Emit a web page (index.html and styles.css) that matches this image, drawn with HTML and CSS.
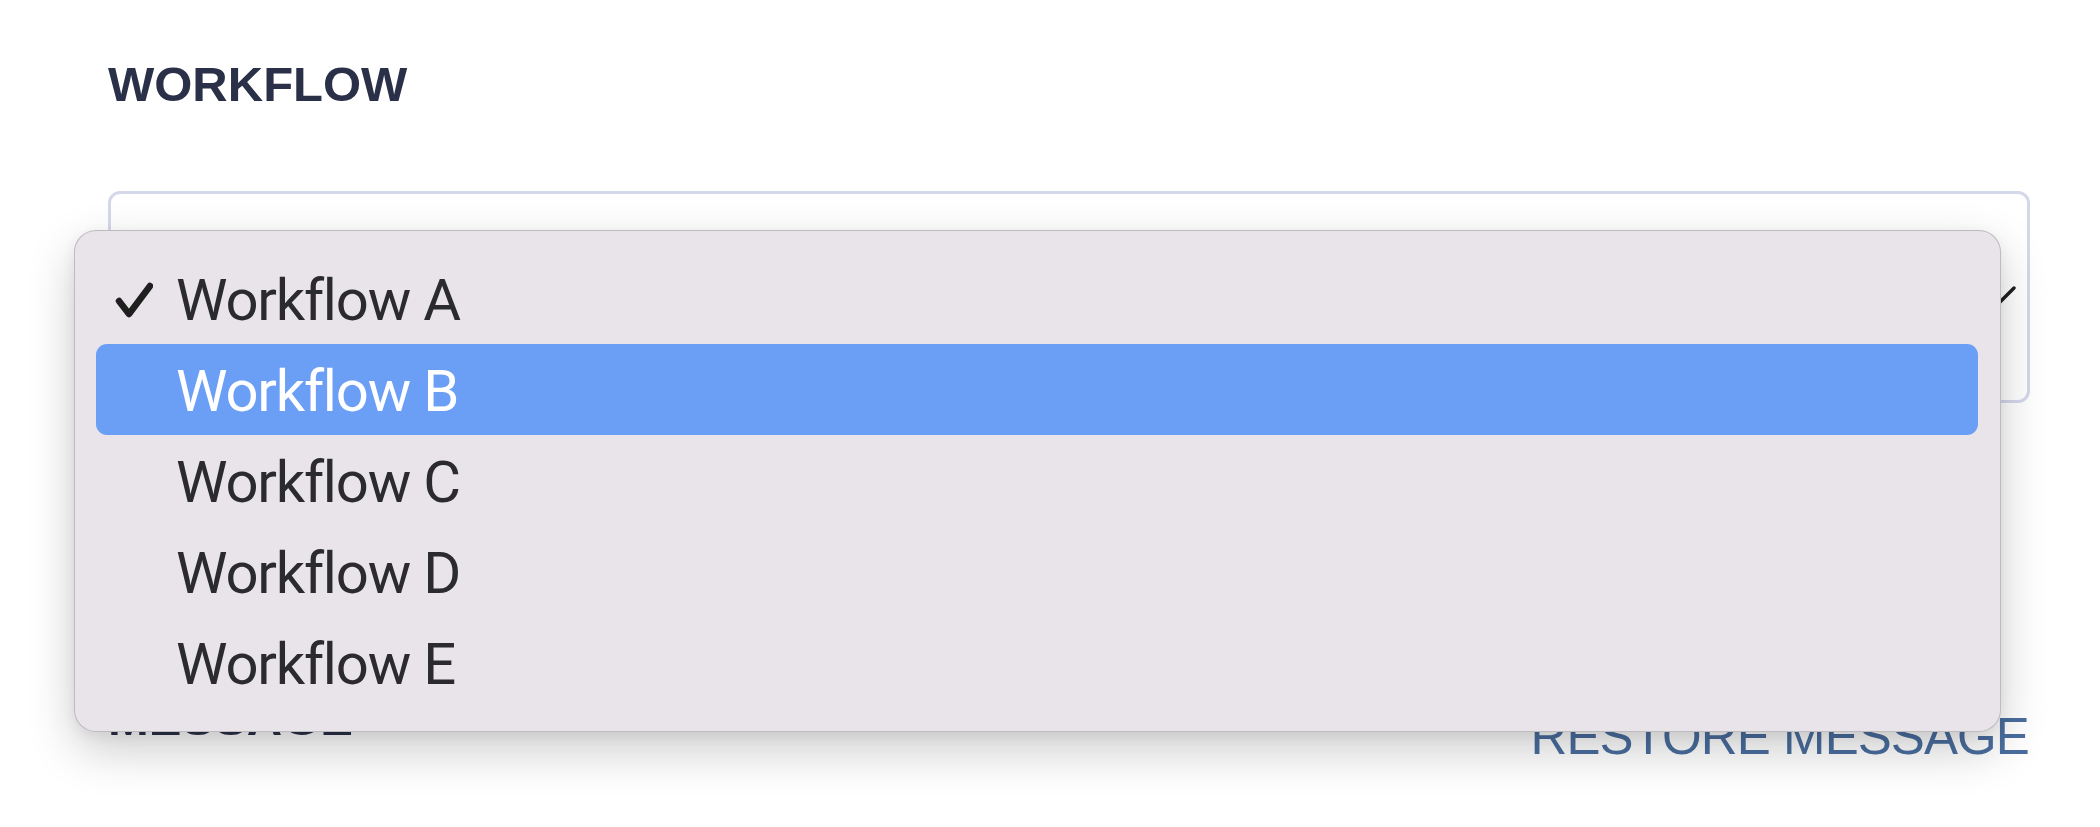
FILE: index.html
```html
<!DOCTYPE html>
<html lang="en">
<head>
<meta charset="utf-8">
<title>Workflow</title>
<link rel="stylesheet" href="styles.css">
</head>
<body>
<div class="page">
  <h2 class="label">WORKFLOW</h2>
  <div class="select">
    <svg class="chevron" width="36" height="20" viewBox="0 0 36 20"><polyline points="2,2 18,18 34,2" fill="none" stroke="#1e1e1e" stroke-width="3.4" stroke-linecap="round" stroke-linejoin="round"/></svg>
  </div>
  <div class="message-row">
    <h2 class="label">MESSAGE</h2>
    <a class="restore">RESTORE MESSAGE</a>
  </div>

  <ul class="menu">
    <li class="item checked">
      <svg class="check" width="38" height="36" viewBox="0 0 38 36"><polyline points="4,19 14,32 35,4" fill="none" stroke="#1f1f1f" stroke-width="6.5" stroke-linecap="round" stroke-linejoin="round"/></svg>
      <span>Workflow A</span>
    </li>
    <li class="item active"><span>Workflow B</span></li>
    <li class="item"><span>Workflow C</span></li>
    <li class="item"><span>Workflow D</span></li>
    <li class="item"><span>Workflow E</span></li>
  </ul>
</div>
</body>
</html>
```

FILE: styles.css
```css
html, body {
  margin: 0;
  padding: 0;
  background: #ffffff;
}

.page {
  position: relative;
  padding: 60px 70px 0 108px;
  height: 827px;
  box-sizing: border-box;
  overflow: hidden;
}

.label {
  margin: 0;
  font-family: "Liberation Sans", Arial, sans-serif;
  font-weight: 700;
  font-size: 49px;
  line-height: 49px;
  color: #2b3049;
  letter-spacing: 0;
}

.select {
  margin-top: 82px;
  height: 212px;
  box-sizing: border-box;
  border: 3px solid #d4d8eb;
  border-radius: 12px;
  background: #ffffff;
  display: flex;
  align-items: center;
  justify-content: flex-end;
  padding-right: 11px;
}

.chevron {
  display: block;
  margin-top: -2px;
}

.message-row {
  display: flex;
  justify-content: space-between;
  align-items: flex-start;
  margin-top: 291px;
}

.restore {
  margin-top: 17px;
  font-family: "Liberation Sans", Arial, sans-serif;
  font-size: 51px;
  line-height: 51px;
  letter-spacing: -0.9px;
  color: #4a6e9f;
  margin-right: 1px;
}

.menu {
  position: absolute;
  left: 74px;
  top: 230px;
  width: 1927px;
  height: 502px;
  box-sizing: border-box;
  margin: 0;
  padding: 22px 22px 0 21px;
  list-style: none;
  background: #e8e4ea;
  border: 1.5px solid rgba(0, 0, 0, 0.18);
  border-radius: 22px;
  box-shadow: 0 18px 48px rgba(0, 0, 0, 0.2), 0 4px 14px rgba(0, 0, 0, 0.06);
}

.item {
  position: relative;
  height: 91px;
  box-sizing: border-box;
  padding: 4px 0 0 80px;
  font-family: Roboto, "Noto Sans", sans-serif;
  font-size: 58px;
  line-height: 87px;
  color: #2b2a2c;
  border-radius: 11px;
  letter-spacing: -1.2px;
}

.item.active {
  background: #6b9ff6;
  color: #ffffff;
}

.check {
  position: absolute;
  left: 19px;
  top: 29px;
}
```
